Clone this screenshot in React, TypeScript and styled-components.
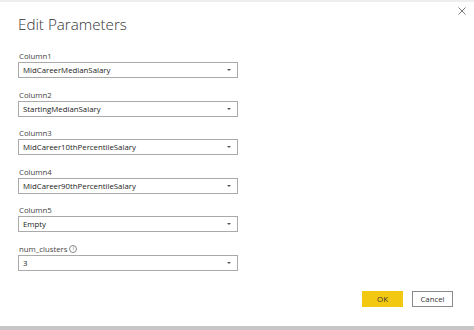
import React from 'react';
import styled, { createGlobalStyle } from 'styled-components';

const GlobalStyle = createGlobalStyle`
  html, body {
    margin: 0;
    padding: 0;
    background: #ffffff;
  }
  body {
    font-family: 'Open Sans', 'Noto Sans', sans-serif;
  }
`;

const Dialog = styled.div`
  width: 474px;
  height: 330px;
  box-sizing: border-box;
  background: #ffffff;
  border-top: 2px solid #eeeeee;
  display: flex;
  flex-direction: column;
  overflow: hidden;
`;

const Header = styled.div`
  display: flex;
  justify-content: space-between;
  align-items: flex-start;
  padding: 5px 8px 0 18px;
`;

const Title = styled.h1`
  margin: 7px 0 0;
  font-family: 'Open Sans', sans-serif;
  font-weight: 300;
  font-size: 15.2px;
  line-height: 20px;
  color: #333333;
`;

const CloseButton = styled.button`
  border: none;
  background: none;
  padding: 0;
  width: 8px;
  height: 8px;
  display: flex;
  cursor: pointer;
`;

const Form = styled.div`
  display: flex;
  flex-direction: column;
  gap: 11.6px;
  padding: 17px 0 0 18px;
  width: 220px;
`;

const Field = styled.div`
  display: flex;
  flex-direction: column;
  gap: 1px;
`;

const Label = styled.label`
  display: flex;
  align-items: center;
  gap: 2px;
  font-size: 7.8px;
  line-height: 10px;
  color: #444444;
  padding-left: 1px;
`;

const InfoIcon = styled.span`
  display: inline-flex;
  align-items: center;
  justify-content: center;
  width: 6px;
  height: 6px;
  border: 1px solid #888888;
  border-radius: 50%;
  font-size: 5px;
  line-height: 1;
  color: #666666;
`;

const Select = styled.div`
  height: 16px;
  box-sizing: border-box;
  border: 1px solid #aaaaaa;
  display: flex;
  align-items: center;
  justify-content: space-between;
  padding: 0 6px 0 4px;
  font-size: 7.8px;
  color: #222222;
`;

const Caret = styled.span`
  width: 0;
  height: 0;
  border-left: 2px solid transparent;
  border-right: 2px solid transparent;
  border-top: 2px solid #555555;
`;

const Footer = styled.div`
  margin-top: auto;
  display: flex;
  justify-content: flex-end;
  gap: 9px;
  padding: 0 21px 19px 0;
`;

const Button = styled.button<{ $primary?: boolean }>`
  width: 41px;
  height: 16px;
  box-sizing: border-box;
  padding: 0;
  font-family: 'Open Sans', sans-serif;
  font-size: 7.8px;
  color: #333333;
  background: ${(p) => (p.$primary ? '#f2c811' : '#ffffff')};
  border: 1px solid ${(p) => (p.$primary ? '#f2c811' : '#8a8a8a')};
`;

const BottomBar = styled.div`
  height: 4px;
  background: #c6c6c6;
`;

const fields = [
  { label: 'Column1', value: 'MidCareerMedianSalary' },
  { label: 'Column2', value: 'StartingMedianSalary' },
  { label: 'Column3', value: 'MidCareer10thPercentileSalary' },
  { label: 'Column4', value: 'MidCareer90thPercentileSalary' },
  { label: 'Column5', value: 'Empty' },
  { label: 'num_clusters', value: '3', info: true },
];

export default function App() {
  return (
    <>
      <GlobalStyle />
      <Dialog>
        <Header>
          <Title>Edit Parameters</Title>
          <CloseButton aria-label="Close">
            <svg width="8" height="8" viewBox="0 0 8 8">
              <path d="M0.5 0.5 L7.5 7.5 M7.5 0.5 L0.5 7.5" stroke="#7a7a7a" strokeWidth="1" />
            </svg>
          </CloseButton>
        </Header>
        <Form>
          {fields.map((f) => (
            <Field key={f.label}>
              <Label>
                {f.label}
                {f.info && <InfoIcon>i</InfoIcon>}
              </Label>
              <Select>
                <span>{f.value}</span>
                <Caret />
              </Select>
            </Field>
          ))}
        </Form>
        <Footer>
          <Button $primary>OK</Button>
          <Button>Cancel</Button>
        </Footer>
        <BottomBar />
      </Dialog>
    </>
  );
}
